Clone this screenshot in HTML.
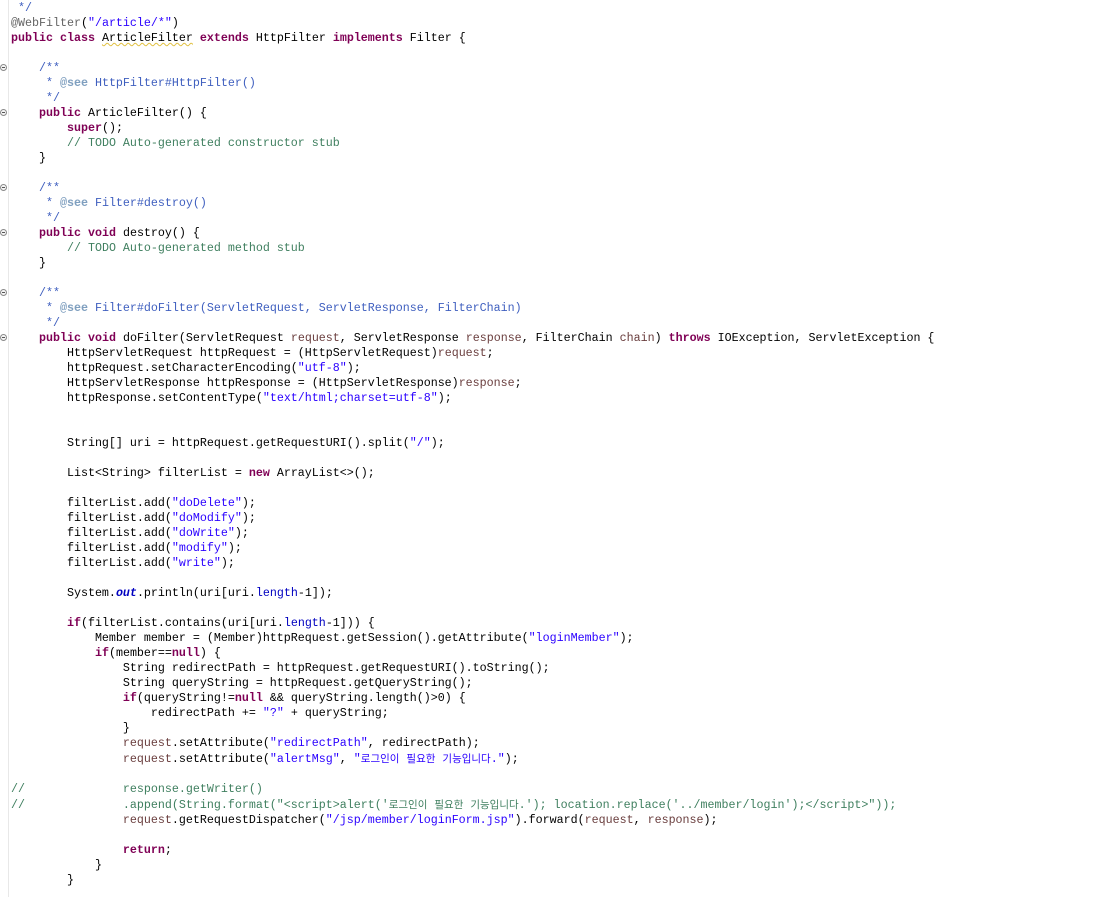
<!DOCTYPE html>
<html><head><meta charset="utf-8"><style>
html,body{margin:0;padding:0;background:#fff;width:1115px;height:897px;overflow:hidden}
.g{position:absolute;left:8px;top:0;width:1px;height:897px;background:#e8e8e8}
pre{position:absolute;left:11px;top:1px;margin:0;font-family:"Liberation Mono","Noto Sans CJK KR",monospace;font-size:11.67px;line-height:15px;color:#000}
.kw{color:#7F0055;font-weight:bold}.s{color:#2A00FF}.c{color:#3F7F5F}.jd{color:#3F5FBF}.t{color:#7F9FBF;font-weight:bold}.an{color:#646464}
.f{color:#0000C0;font-weight:bold;font-style:italic}.fl{color:#0000C0}.p{color:#6a3e3e}
.k{font-family:"Noto Sans CJK KR",sans-serif;font-size:10.5px}
.u{text-decoration:underline wavy #e0c040;text-decoration-thickness:1px}
.fold{position:absolute;left:0;width:7px;height:7px;border:1px solid #8a8a8a;border-radius:50%;box-sizing:border-box;background:#f4f4f4}
.fold:after{content:"";position:absolute;left:1px;right:1px;top:2px;height:1px;background:#555}
</style></head><body>
<div class="g"></div>
<div class="fold" style="top:64px"></div>
<div class="fold" style="top:109px"></div>
<div class="fold" style="top:184px"></div>
<div class="fold" style="top:229px"></div>
<div class="fold" style="top:289px"></div>
<div class="fold" style="top:334px"></div>
<pre><span class="jd"> */</span>
<span class="an">@WebFilter</span>(<span class="s">"/article/*"</span>)
<span class="kw">public</span> <span class="kw">class</span> <span class="u">ArticleFilter</span> <span class="kw">extends</span> HttpFilter <span class="kw">implements</span> Filter {

    <span class="jd">/**</span>
<span class="jd">     * </span><span class="t">@see</span><span class="jd"> HttpFilter#HttpFilter()</span>
<span class="jd">     */</span>
    <span class="kw">public</span> ArticleFilter() {
        <span class="kw">super</span>();
        <span class="c">// TODO Auto-generated constructor stub</span>
    }

    <span class="jd">/**</span>
<span class="jd">     * </span><span class="t">@see</span><span class="jd"> Filter#destroy()</span>
<span class="jd">     */</span>
    <span class="kw">public</span> <span class="kw">void</span> destroy() {
        <span class="c">// TODO Auto-generated method stub</span>
    }

    <span class="jd">/**</span>
<span class="jd">     * </span><span class="t">@see</span><span class="jd"> Filter#doFilter(ServletRequest, ServletResponse, FilterChain)</span>
<span class="jd">     */</span>
    <span class="kw">public</span> <span class="kw">void</span> doFilter(ServletRequest <span class="p">request</span>, ServletResponse <span class="p">response</span>, FilterChain <span class="p">chain</span>) <span class="kw">throws</span> IOException, ServletException {
        HttpServletRequest httpRequest = (HttpServletRequest)<span class="p">request</span>;
        httpRequest.setCharacterEncoding(<span class="s">"utf-8"</span>);
        HttpServletResponse httpResponse = (HttpServletResponse)<span class="p">response</span>;
        httpResponse.setContentType(<span class="s">"text/html;charset=utf-8"</span>);


        String[] uri = httpRequest.getRequestURI().split(<span class="s">"/"</span>);

        List&lt;String&gt; filterList = <span class="kw">new</span> ArrayList&lt;&gt;();

        filterList.add(<span class="s">"doDelete"</span>);
        filterList.add(<span class="s">"doModify"</span>);
        filterList.add(<span class="s">"doWrite"</span>);
        filterList.add(<span class="s">"modify"</span>);
        filterList.add(<span class="s">"write"</span>);

        System.<span class="f">out</span>.println(uri[uri.<span class="fl">length</span>-1]);

        <span class="kw">if</span>(filterList.contains(uri[uri.<span class="fl">length</span>-1])) {
            Member member = (Member)httpRequest.getSession().getAttribute(<span class="s">"loginMember"</span>);
            <span class="kw">if</span>(member==<span class="kw">null</span>) {
                String redirectPath = httpRequest.getRequestURI().toString();
                String queryString = httpRequest.getQueryString();
                <span class="kw">if</span>(queryString!=<span class="kw">null</span> &amp;&amp; queryString.length()&gt;0) {
                    redirectPath += <span class="s">"?"</span> + queryString;
                }
                <span class="p">request</span>.setAttribute(<span class="s">"redirectPath"</span>, redirectPath);
                <span class="p">request</span>.setAttribute(<span class="s">"alertMsg"</span>, <span class="s">"<span class="k">로그인이</span> <span class="k">필요한</span> <span class="k">기능입니다</span>."</span>);

<span class="c">//              response.getWriter()</span>
<span class="c">//              .append(String.format("&lt;script&gt;alert('<span class="k">로그인이</span> <span class="k">필요한</span> <span class="k">기능입니다</span>.'); location.replace('../member/login');&lt;/script&gt;"));</span>
                <span class="p">request</span>.getRequestDispatcher(<span class="s">"/jsp/member/loginForm.jsp"</span>).forward(<span class="p">request</span>, <span class="p">response</span>);

                <span class="kw">return</span>;
            }
        }
</pre>
</body></html>
